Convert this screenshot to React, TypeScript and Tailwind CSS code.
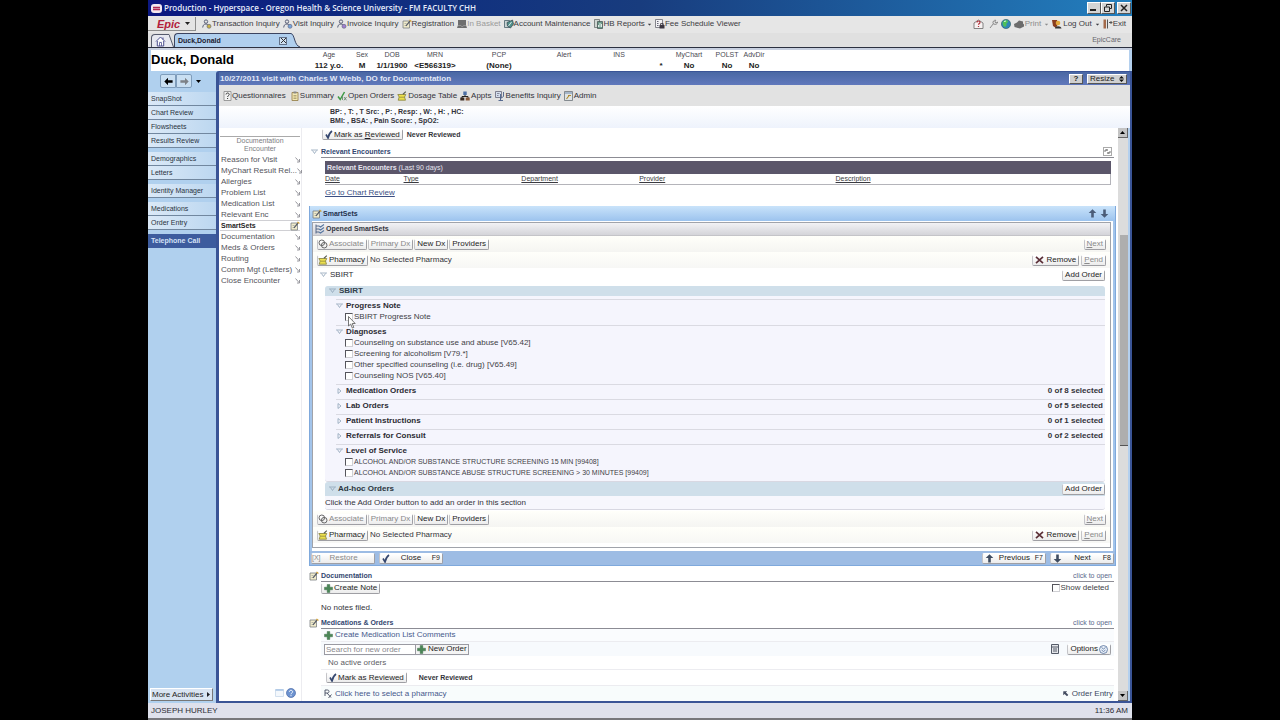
import { useState } from "react"
import type { ReactNode } from "react"
import clsx from "clsx"

interface IconProps {
  className?: string
}

interface SmartSection {
  name: string
  items: string[]
  total?: number
  small?: boolean
}

const menuItems = [
  { label: "Transaction Inquiry", icon: "person", tint: "#c8b24a" },
  { label: "Visit Inquiry", icon: "person", tint: "#7aa6dc" },
  { label: "Invoice Inquiry", icon: "person", tint: "#a07fd0" },
  { label: "Registration", icon: "note" },
  { label: "In Basket", icon: "basket", muted: true },
  { label: "Account Maintenance", icon: "chart", tint: "#4f8f8a" },
  { label: "HB Reports", icon: "report", tint: "#6b9a8a", menu: true },
  { label: "Fee Schedule Viewer", icon: "sheet" },
]

const patientFields = [
  { label: "Age", value: "112 y.o.", width: "w-12" },
  { label: "Sex", value: "M", width: "w-[18px]" },
  { label: "DOB", value: "1/1/1900", width: "w-[42px]" },
  { label: "MRN", value: "<E566319>", width: "w-11" },
  { label: "PCP", value: "(None)", width: "w-[84px]" },
  { label: "Alert", value: "", width: "w-[46px]" },
  { label: "INS", value: "", width: "w-16" },
  { label: "", value: "*", width: "w-5" },
  { label: "MyChart", value: "No", width: "w-9" },
  { label: "POLST", value: "No", width: "w-10" },
  { label: "AdvDir", value: "No", width: "w-[14px]" },
]

const activityGroups = [
  ["SnapShot", "Chart Review", "Flowsheets", "Results Review"],
  ["Demographics", "Letters"],
  ["Identity Manager"],
  ["Medications", "Order Entry"],
]

const navItems = [
  "Reason for Visit",
  "MyChart Result Rel...",
  "Allergies",
  "Problem List",
  "Medication List",
  "Relevant Enc",
  "SmartSets",
  "Documentation",
  "Meds & Orders",
  "Routing",
  "Comm Mgt (Letters)",
  "Close Encounter",
]

const encounterColumns = [
  { label: "Date", width: "w-[10%]" },
  { label: "Type", width: "w-[15%]" },
  { label: "Department", width: "w-[15%]" },
  { label: "Provider", width: "w-[25%]" },
  { label: "Description", width: "w-[35%]" },
]

const smartSections: SmartSection[] = [
  { name: "Progress Note", items: ["SBIRT Progress Note"] },
  {
    name: "Diagnoses",
    items: [
      "Counseling on substance use and abuse [V65.42]",
      "Screening for alcoholism [V79.*]",
      "Other specified counseling (i.e. drug) [V65.49]",
      "Counseling NOS [V65.40]",
    ],
  },
  { name: "Medication Orders", items: [], total: 8 },
  { name: "Lab Orders", items: [], total: 5 },
  { name: "Patient Instructions", items: [], total: 1 },
  { name: "Referrals for Consult", items: [], total: 2 },
  {
    name: "Level of Service",
    small: true,
    items: [
      "ALCOHOL AND/OR SUBSTANCE STRUCTURE SCREENING 15 MIN [99408]",
      "ALCOHOL AND/OR SUBSTANCE ABUSE STRUCTURE SCREENING > 30 MINUTES [99409]",
    ],
  },
]

/* ---------- icons ---------- */

function PersonIcon({ tint }: { tint?: string }) {
  return (
    <svg className="h-[10px] w-[10px] shrink-0" viewBox="0 0 10 10" fill="none">
      <circle cx="4" cy="2.6" r="1.7" stroke="#5a6078" />
      <path d="M.7 8.5C1 6 2 5 4 5c1 0 1.7.4 2.2 1" stroke="#5a6078" />
      <circle cx="7" cy="7.3" r="2" fill={tint} stroke="#5a6078" strokeWidth=".6" />
    </svg>
  )
}

function NoteIcon() {
  return (
    <svg className="h-[10px] w-[10px] shrink-0" viewBox="0 0 10 10" fill="none">
      <path d="M1 2h6.5v7H1z" fill="#f1ebca" stroke="#7a7f80" strokeWidth=".8" />
      <path d="M2.5 4.5h2M2.5 6.5h1.5" stroke="#9a9f9a" strokeWidth=".7" />
      <path d="M4 6.8 8 2" stroke="#565c66" strokeWidth="1.2" />
      <path d="M7.4 1 9.4 2.6" stroke="#d0a23a" strokeWidth="1.3" />
    </svg>
  )
}

function BasketIcon() {
  return (
    <svg className="h-[10px] w-[10px] shrink-0" viewBox="0 0 10 10">
      <path d="M1 1h8v5l1 3H0l1-3z" fill="#6e6e6e" />
      <path d="M1 6.5h3l.5 1H6l.5-1H9" stroke="#aaa" strokeWidth=".6" fill="none" />
    </svg>
  )
}

function ChartIcon({ tint }: { tint?: string }) {
  return (
    <svg className="h-[10px] w-[10px] shrink-0" viewBox="0 0 10 10">
      <path d="M.5 1.5h5v7h-5z" fill="#c9d4d4" stroke="#48606a" strokeWidth=".8" />
      <path d="M3 3.5 8.5 1l1 4-3 4-3-2z" fill={tint} stroke="#34444a" strokeWidth=".7" />
      <path d="m4.5 7 3-4" stroke="#fff" strokeWidth=".8" />
    </svg>
  )
}

function ReportIcon({ tint }: { tint?: string }) {
  return (
    <svg className="h-[10px] w-[10px] shrink-0" viewBox="0 0 10 10">
      <path d="M.5.5h5v8h-5z" fill="#cfd6d2" stroke="#59605e" strokeWidth=".7" />
      <path d="M3.5 2.5h5v7h-5z" fill={tint} stroke="#3f4a4a" strokeWidth=".7" />
      <path d="M4.5 8V6M6 8V4M7.5 8V5" stroke="#fff" strokeWidth=".8" />
    </svg>
  )
}

function SheetIcon() {
  return (
    <svg className="h-[10px] w-[10px] shrink-0" viewBox="0 0 10 10">
      <path d="M.5.5h7v8h-7z" fill="#f2f2f4" stroke="#6a6a72" strokeWidth=".8" />
      <path d="M2 2.5h1.5M2 4.5h1.5M2 6.5h1.5" stroke="#556" strokeWidth=".9" />
      <path d="M4.5 6h5v3.5h-5z" fill="#3a3540" />
      <path d="M5.6 6V4.6h2.6V6" fill="none" stroke="#3a3540" strokeWidth=".9" />
    </svg>
  )
}

function MenuIcon({ icon, tint }: { icon: string; tint?: string }) {
  if (icon === "person") return <PersonIcon tint={tint} />
  if (icon === "note") return <NoteIcon />
  if (icon === "basket") return <BasketIcon />
  if (icon === "chart") return <ChartIcon tint={tint} />
  if (icon === "report") return <ReportIcon tint={tint} />
  return <SheetIcon />
}

function HomeIcon() {
  return (
    <svg className="h-[11px] w-[11px]" viewBox="0 0 11 11" fill="none">
      <path d="M1 5.5 5.5 1 10 5.5M2.3 5v5h6.4V5" stroke="#4c4f8e" fill="#fff" />
      <path d="M4.5 10V6.5h2V10" stroke="#4c4f8e" strokeWidth=".8" />
      <path d="M8 1.5v2" stroke="#4c4f8e" />
    </svg>
  )
}

function QuestionIcon() {
  return (
    <svg className="h-[10px] w-[9px] shrink-0" viewBox="0 0 9 10" fill="none">
      <path d="M1 .5h7v9H1z" fill="#f4f4f4" stroke="#888" strokeWidth=".8" />
      <path d="M3 3.5c0-2 3.2-2 3.2 0 0 1.200-1.600 1.200-1.600 2.500M4.600 7v1" stroke="#333" />
    </svg>
  )
}

function SummaryIcon() {
  return (
    <svg className="h-[10px] w-[8px] shrink-0" viewBox="0 0 8 10">
      <path d="M1 1.5h6v8H1z" fill="#f3e8b4" stroke="#9a8450" strokeWidth=".9" />
      <path d="M2.5.5h3v2h-3z" fill="#888" />
      <path d="M2.5 4.5h3M2.5 6h3M2.5 7.5h3" stroke="#8a7a4c" strokeWidth=".6" />
    </svg>
  )
}

function OpenOrdersIcon() {
  return (
    <svg className="h-[10px] w-[10px] shrink-0" viewBox="0 0 10 10" fill="none">
      <path d="m1 5.500 2.200 3L7.500 1" stroke="#3d9a44" strokeWidth="1.5" />
      <path d="M5.5 9V5.5M7 9.300 9.500 6M7 6l2.500 3.300" stroke="#5b7f62" strokeWidth=".8" />
    </svg>
  )
}

function PharmacyIcon() {
  return (
    <svg className="h-[10px] w-[10px] shrink-0" viewBox="0 0 10 10">
      <path d="M.8 3.500h8L7.500 6l1 3.200H1.200l1-3.200z" fill="#ece04e" stroke="#85803a" strokeWidth=".8" />
      <path d="M6 3.300 8.800.6" stroke="#5c5f50" strokeWidth="1.2" />
      <path d="M2.5 6.200h5" stroke="#85803a" strokeWidth=".7" />
    </svg>
  )
}

function ApptsIcon() {
  return (
    <svg className="h-[10px] w-[10px] shrink-0" viewBox="0 0 10 10">
      <path d="M3.300.5h3.400v3.500H3.300z" fill="#4d6fa5" />
      <path d="M5 4v2M2 7V5.500h6V7" stroke="#222" fill="none" />
      <path d="M.3 6.500h4v3h-4z" fill="#3a2a22" />
      <path d="M5.700 6.500h4v3h-4z" fill="#8a5a3a" />
    </svg>
  )
}

function BenefitsIcon() {
  return (
    <svg className="h-[10px] w-[10px] shrink-0" viewBox="0 0 10 10" fill="none">
      <path d="M.5.5h6v6h-6z" fill="#d4deee" stroke="#667" strokeWidth=".8" />
      <path d="M2 2.5h2.500M2 4.500h1.500" stroke="#667" strokeWidth=".7" />
      <path d="M5.5 3v6.500M3.500 9.500h4.500M8.500 1v4.500l-3 2" stroke="#4a5f88" strokeWidth=".9" />
    </svg>
  )
}

function AdminIcon() {
  return (
    <svg className="h-[10px] w-[9px] shrink-0" viewBox="0 0 9 10" fill="none">
      <path d="M.5.5h8v9h-8z" fill="#dfe4e6" stroke="#6d757a" strokeWidth=".8" />
      <path d="M1 2h7" stroke="#7f98b8" strokeWidth="1.2" />
      <path d="m2.500 8 3-4M4 4.500h3" stroke="#b08a2a" strokeWidth="1.1" />
    </svg>
  )
}

function ArrowIcon({ className }: IconProps) {
  return (
    <svg className={clsx("h-[9px] w-[9px] shrink-0", className)} viewBox="0 0 9 9">
      <path d="M4.500.3 8.300 4H5.800v4.600H3.200V4H.7z" fill="currentColor" />
    </svg>
  )
}

function CaretIcon({ className }: IconProps) {
  return (
    <svg className={clsx("h-[3px] w-[5px] shrink-0", className)} viewBox="0 0 5 3">
      <path d="M0 0h5L2.500 3z" fill="currentColor" />
    </svg>
  )
}

function CheckIcon() {
  return (
    <svg className="h-[9px] w-[8px] shrink-0" viewBox="0 0 8 9" fill="none">
      <path d="M1 4.500 3 8C3.500 5 5 2.500 7 1" stroke="#35476f" strokeWidth="1.6" />
    </svg>
  )
}

function PlusIcon() {
  return (
    <svg className="h-[9px] w-[9px] shrink-0" viewBox="0 0 9 9">
      <path d="M3.200.5h2.600v2.700h2.700v2.600H5.800v2.700H3.200V5.800H.5V3.200h2.700z" fill="#4a8656" stroke="#2f5f3c" strokeWidth=".4" />
    </svg>
  )
}

function AssociateIcon() {
  return (
    <svg className="h-[10px] w-[10px] shrink-0" viewBox="0 0 10 10" fill="none">
      <circle cx="3.8" cy="3.8" r="2.8" stroke="#666" />
      <circle cx="6.2" cy="6.2" r="2.8" stroke="#666" />
    </svg>
  )
}

function RemoveIcon() {
  return (
    <svg className="h-[8px] w-[9px] shrink-0" viewBox="0 0 9 8">
      <path d="m1 .8 7 6.400M8 .8 1 7.200" stroke="#5c3038" strokeWidth="1.7" />
    </svg>
  )
}

function JumpIcon() {
  return (
    <svg className="h-[6px] w-[5px] shrink-0" viewBox="0 0 5 6" fill="none">
      <path d="m.5.5 3.500 4M4.500 2v3H2" stroke="#8d8d94" strokeWidth=".9" />
    </svg>
  )
}

function DisclosureIcon({ open }: { open: boolean }) {
  return (
    <svg className="h-[6px] w-[7px] shrink-0" viewBox="0 0 7 6" fill="none">
      <path d={open ? "M0 1h7M1.500 1.500 3.500 4.500 5.500 1.500" : "m2 .5 3 2.500-3 2.500z"} stroke="#8fa3b8" strokeWidth=".8" />
    </svg>
  )
}

function OpenedIcon() {
  return (
    <svg className="h-[10px] w-[10px] shrink-0" viewBox="0 0 10 10" fill="none">
      <path d="M1 .5v9M1 2h3M1 5h3M1 8h3" stroke="#4a5f80" strokeWidth=".9" />
      <path d="m4 2 1.500 1L9 .5M4 5l1.500 1L9 3.500M4 8l1.500 1L9 6.500" stroke="#5877a0" strokeWidth="1.1" />
    </svg>
  )
}

function PointerIcon({ className }: IconProps) {
  return (
    <svg className={clsx("h-[13px] w-2", className)} viewBox="0 0 8 13">
      <path d="M.5.5v9.500l2.200-2 1.600 4 1.500-.6-1.600-3.900h3z" fill="#fff" stroke="#555" strokeWidth=".8" />
    </svg>
  )
}

/* ---------- small controls ---------- */

interface ToolButtonProps {
  children: ReactNode
  disabled?: boolean
  className?: string
}

function ToolButton({ children, disabled, className }: ToolButtonProps) {
  return (
    <button
      type="button"
      disabled={disabled}
      className={clsx(
        "flex h-[11px] items-center gap-[1px] rounded-[2px] border border-t-white border-r-[#9f9fa4] border-b-[#9f9fa4] border-l-[#c4c4c8] bg-linear-to-b from-white to-[#ececec] px-[2px]",
        disabled ? "text-[#8a8a8a]" : "text-[#1e1e24]",
        className
      )}
    >
      {children}
    </button>
  )
}

function CheckBox({ label, small }: { label: string; small?: boolean }) {
  return (
    <label className={clsx("flex h-[11px] w-fit items-center gap-[1px] text-[#3f3f46]", small && "text-[7px]")}>
      <input
        type="checkbox"
        className="h-2 w-2 appearance-none border border-t-[#55555c] border-r-[#d0d0d4] border-b-[#d0d0d4] border-l-[#55555c] bg-white checked:bg-[#55555c]"
      />
      {label}
    </label>
  )
}

function SectionTitle({ children, icon, aside }: { children: string; icon: ReactNode; aside: ReactNode }) {
  return (
    <div className="flex h-3">
      <span className="flex w-3 items-center">{icon}</span>
      <div className="flex flex-1 items-center border-b border-[#8c8c94]">
        <h2 className="text-[7px] font-bold text-[#32466f]">{children}</h2>
        <span className="ml-auto pr-[2px]">{aside}</span>
      </div>
    </div>
  )
}

function SmartSetActions() {
  return (
    <>
      <div className="flex h-4 items-center gap-[1px] bg-linear-to-b from-[#fffffa] to-[#f5f5f2] pr-1 pl-1">
        <ToolButton disabled className="pl-0">
          <AssociateIcon />
          Associate
        </ToolButton>
        <ToolButton disabled>Primary Dx</ToolButton>
        <ToolButton>New Dx</ToolButton>
        <ToolButton>Providers</ToolButton>
        <ToolButton disabled className="ml-auto">
          <span>
            <u>N</u>ext
          </span>
        </ToolButton>
      </div>
      <div className="flex h-4 items-center gap-[2px] bg-linear-to-b from-[#fffffa] to-[#f7f7f5] pr-1 pl-1">
        <ToolButton className="pl-0">
          <PharmacyIcon />
          Pharmacy
        </ToolButton>
        <span>No Selected Pharmacy</span>
        <ToolButton className="ml-auto">
          <RemoveIcon />
          <span className="ml-[2px]">Remove</span>
        </ToolButton>
        <ToolButton disabled>
          <span>
            <u>P</u>end
          </span>
        </ToolButton>
      </div>
    </>
  )
}

function SmartSetSection({ name, items, total, small }: SmartSection) {
  const [open, setOpen] = useState(!!items.length)

  return (
    <section className="ml-[11px] border-t border-[#dadae2] pb-[3px]">
      <div className="flex h-[11px] items-center">
        <button
          type="button"
          className="flex items-center gap-[3px] font-bold text-[#2b2b33]"
          onClick={() => setOpen(!open)}
        >
          <DisclosureIcon open={open} />
          {name}
        </button>
        {total && <span className="ml-auto pr-[2px] font-bold">0 of {total} selected</span>}
      </div>
      {open && (
        <div className="pl-[9px]">
          {items.map((item) => (
            <CheckBox key={item} label={item} small={small} />
          ))}
        </div>
      )}
    </section>
  )
}

/* ---------- page parts ---------- */

function TitleBar() {
  return (
    <header className="flex h-4 items-center bg-linear-to-r from-[#0c1880] via-[#183c7e] to-[#237fbe] pr-[1px] pl-[3px]">
      <svg className="h-[9px] w-[11px]" viewBox="0 0 11 9">
        <rect width="11" height="9" rx="3" fill="#f3e9f0" />
        <path d="M2 3.500h7M2 5.500h7" stroke="#b02a52" strokeWidth="1.3" />
      </svg>
      <h1 className="ml-[2px] font-['Open_Sans',sans-serif] text-[8px] font-semibold text-[#e6ecfa]">
        Production - Hyperspace - Oregon Health &amp; Science University - FM FACULTY CHH
      </h1>
      <div className="ml-auto flex text-[#222]">
        <button type="button" aria-label="Minimize" className="flex h-3 w-[14px] items-end border border-t-white border-l-white border-r-[#555] border-b-[#555] bg-[#d4d4d4] p-[2px]">
          <span className="h-[2px] w-[6px] bg-[#222]" />
        </button>
        <button type="button" aria-label="Restore window" className="flex h-3 w-[14px] items-center justify-center border border-t-white border-l-white border-r-[#555] border-b-[#555] bg-[#d4d4d4]">
          <svg className="h-2 w-2" viewBox="0 0 8 8" fill="none" stroke="#222">
            <path d="M2.500 2.500v-2h5v4h-2M.5 3h5v4.500h-5z" />
          </svg>
        </button>
        <button type="button" aria-label="Close window" className="ml-[2px] flex h-3 w-[14px] items-center justify-center border border-t-white border-l-white border-r-[#555] border-b-[#555] bg-[#d4d4d4]">
          <svg className="h-2 w-2" viewBox="0 0 8 8" fill="none" stroke="#222" strokeWidth="1.5">
            <path d="m1 1 6 6M7 1 1 7" />
          </svg>
        </button>
      </div>
    </header>
  )
}

function MenuBar() {
  return (
    <nav className="flex h-[17px] items-center bg-[#e6e6e6] pb-[1px] text-[#3c3c42]">
      <button
        type="button"
        className="mr-[6px] flex h-[14px] w-12 items-center justify-between border-r border-b border-[#8c8c8c] bg-[#e4e4e4] pr-[5px] pl-[9px] text-[11px] font-black text-[#b3203c] italic"
      >
        Epic
        <CaretIcon className="text-[#222]" />
      </button>
      <div className="flex items-center gap-[3px]">
        {menuItems.map(({ label, icon, tint, muted, menu }) => (
          <button
            key={label}
            type="button"
            className={clsx("flex items-center", muted && "text-[#9a9a9a]")}
          >
            <MenuIcon icon={icon} tint={tint} />
            {label}
            {menu && <CaretIcon className="ml-[2px] scale-75" />}
          </button>
        ))}
      </div>
      <div className="ml-auto flex items-center gap-[3px] pr-[6px]">
        <svg className="mr-[2px] h-[10px] w-[11px]" viewBox="0 0 11 10" fill="none">
          <path d="M1 4 5.500 1 10 4v5.500H1z" fill="#f7f2f2" stroke="#777" strokeWidth=".9" />
          <path d="M4 3.500c0-2 3-2 3 0 0 1-1.500 1-1.500 2.200M5.500 7v1" stroke="#b0303a" strokeWidth="1.2" />
        </svg>
        <svg className="h-[10px] w-[9px]" viewBox="0 0 9 10" fill="none">
          <path d="m1 9 3.500-4.500M4 4.500C3.500 2.500 5 1 6.800 1.200L5.800 3l1.200 1 1.600-1C8.500 5 6.500 6 4.800 5z" stroke="#8a8a8a" />
        </svg>
        <svg className="h-[10px] w-[10px]" viewBox="0 0 10 10">
          <circle cx="5" cy="5" r="4.6" fill="#2f86b8" stroke="#2d5a60" strokeWidth=".6" />
          <path d="M2 2.500C4 .5 7 1 7 2.500S5 4 5.500 5.500 4 8.500 3 7.500 1 4 2 2.500z" fill="#4fc05a" />
          <path d="M3 2.500 5 2" stroke="#d8fbe0" />
        </svg>
        <button type="button" disabled className="flex items-center gap-[1px] text-[#8c8c8c]">
          <svg className="h-[9px] w-[10px]" viewBox="0 0 10 9">
            <path d="M0 4 3 2.500 5 .5l4 1v2l1 1v2L6 8.500.5 7z" fill="#6c6c6c" />
          </svg>
          Print
          <CaretIcon className="ml-[2px] scale-75" />
        </button>
        <button type="button" className="flex items-center gap-[1px]">
          <svg className="h-[10px] w-[10px]" viewBox="0 0 10 10">
            <path d="M0 1h5l1 4-2 4-3-2z" fill="#8a3d1e" />
            <circle cx="6" cy="4" r="2.3" fill="#e3a93c" />
            <path d="M3 9.500c0-3 6-3 6.500 0z" fill="#333" />
          </svg>
          Log Out
          <CaretIcon className="ml-[2px] scale-75" />
        </button>
        <button type="button" className="flex items-center">
          <svg className="h-[10px] w-[10px]" viewBox="0 0 10 10" fill="none">
            <path d="M.5.5h2.500v9H.5z" fill="#a46a4a" />
            <path d="M4.500.5v9" stroke="#555" />
            <path d="M6 3.500h3M7.500 2 9 3.500 7.500 5" stroke="#555" />
          </svg>
          Exit
        </button>
      </div>
    </nav>
  )
}

function TabStrip() {
  return (
    <div className="flex h-[15px] items-end border-b border-[#2c3040] bg-[#e0e0e0] pl-[3px]">
      <button type="button" aria-label="Home" className="flex h-[13px] w-[18px] items-center justify-center rounded-tl-[4px] border-t border-l border-[#555a6c] bg-[#e6e8f0]">
        <HomeIcon />
      </button>
      <svg className="h-[13px] w-[5px]" viewBox="0 0 5 13">
        <path d="M0 0 4.500 13H0z" fill="#e6e8f0" />
        <path d="M0 .5 4.500 13" stroke="#555a6c" fill="none" />
      </svg>
      <div className="flex h-[14px] w-[115px] items-center justify-between rounded-tl-[4px] border-t border-l border-[#3c4460] bg-[#b0cfee] pr-[2px] pl-[3px]">
        <span className="text-[7px] font-bold text-[#1c2030]">Duck,Donald</span>
        <button type="button" aria-label="Close tab" className="flex h-2 w-2 items-center justify-center border border-[#62718a] bg-[#cfe0f2]">
          <svg className="h-[5px] w-[5px]" viewBox="0 0 5 5" stroke="#333">
            <path d="m0 0 5 5M5 0 0 5" />
          </svg>
        </button>
      </div>
      <svg className="h-[14px] w-3" viewBox="0 0 12 14">
        <path d="M0 0h2c4 1 3 12 9 14H0z" fill="#b0cfee" />
        <path d="M0 .5h2c4 1 3 12 9 13.500" stroke="#3c4460" fill="none" />
      </svg>
      <span className="ml-auto self-center pr-[11px] text-[7px] text-[#66666c]">EpicCare</span>
    </div>
  )
}

function PatientHeader() {
  return (
    <div className="border-t-2 border-[#c8d0e0] bg-[#b4d0ee] px-[3px]">
      <div className="flex h-[21px] bg-white whitespace-nowrap">
        <h2 className="w-[154px] text-[13px] leading-[20px] font-bold text-black">Duck, Donald</h2>
        <dl className="flex">
          {patientFields.map(({ label, value, width }, index) => (
            <div key={index} className={clsx("flex flex-col items-center", width)}>
              <dt className="h-[10px] text-[7px] leading-[9px] text-[#4a4a52]">{label}</dt>
              <dd className="leading-[11px] font-bold text-[#222]">{value}</dd>
            </div>
          ))}
        </dl>
      </div>
    </div>
  )
}

function ActivityBar() {
  return (
    <aside className="flex w-[68px] shrink-0 flex-col bg-[#b0d0ee]">
      <div className="flex h-[21px] items-start pt-[3px] pl-3">
        <button type="button" aria-label="Back" className="flex h-[14px] w-4 items-center justify-center rounded-l-[2px] border border-[#7f9dbb] bg-[#c9dff2]">
          <ArrowIcon className="-rotate-90 text-black" />
        </button>
        <button type="button" aria-label="Forward" className="flex h-[14px] w-4 items-center justify-center rounded-r-[2px] border border-[#7f9dbb] bg-[#c9dff2]">
          <ArrowIcon className="rotate-90 text-[#7d8288]" />
        </button>
        <CaretIcon className="mt-[6px] ml-1 text-black" />
      </div>
      <ul className="flex flex-col gap-1">
        {activityGroups.map((group) => (
          <li key={group[0]}>
            {group.map((name) => (
              <button
                key={name}
                type="button"
                className="flex h-[14px] w-full items-center border-b border-[#71879f] bg-linear-to-r from-[#dbe9f7] to-[#bcd7f0] pl-[3px] text-[7px] text-[#2a3340]"
              >
                {name}
              </button>
            ))}
          </li>
        ))}
        <li>
          <button type="button" className="flex h-[14px] w-full items-center bg-[#3d5c9e] pl-[3px] text-[7px] font-bold text-[#d5e2f6]">
            Telephone Call
          </button>
        </li>
      </ul>
      <button
        type="button"
        className="mt-auto mb-[2px] ml-[2px] flex h-[13px] w-[63px] items-center justify-between border border-t-white border-l-white border-r-[#777] border-b-[#777] bg-[#d9e4f2] px-[1px] text-[#1e1e24]"
      >
        More Activities
        <CaretIcon className="-rotate-90" />
      </button>
    </aside>
  )
}

function VisitToolbar() {
  return (
    <div className="flex h-[21px] items-center gap-[3px] bg-[#e2e2e2] pl-1 text-[#33333a]">
      <button type="button" className="flex items-center">
        <QuestionIcon />
        Questionnaires
      </button>
      <button type="button" className="ml-[2px] flex items-center gap-[1px]">
        <SummaryIcon />
        Summary
      </button>
      <button type="button" className="flex items-center gap-[1px]">
        <OpenOrdersIcon />
        Open Orders
      </button>
      <button type="button" className="flex items-center gap-[1px]">
        <PharmacyIcon />
        Dosage Table
      </button>
      <button type="button" className="flex items-center gap-[1px]">
        <ApptsIcon />
        Appts
      </button>
      <button type="button" className="flex items-center gap-[1px]">
        <BenefitsIcon />
        Benefits Inquiry
      </button>
      <button type="button" className="flex items-center gap-[1px]">
        <AdminIcon />
        Admin
      </button>
    </div>
  )
}

function NavColumn() {
  return (
    <nav className="flex w-[83px] shrink-0 flex-col border-r border-[#ececf0] pt-2 pr-[1px] pl-[1px] text-[#55555c]">
      <div className="h-[18px] border-t border-[#aaa] text-center text-[7px] leading-[8px] text-[#7c7c82]">
        Documentation
        <br />
        Encounter
      </div>
      <ul>
        {navItems.map((item) => {
          const active = item === "SmartSets"
          return (
            <li
              key={item}
              className={clsx(
                "flex h-[11px] items-center justify-between pl-[1px] whitespace-nowrap",
                active && "border-y border-[#d0d0d4] font-bold text-[#1e1e24]"
              )}
            >
              <a href="#" className={clsx(active && "text-[7px]")}>{item}</a>
              {active ? <NoteIcon /> : <JumpIcon />}
            </li>
          )
        })}
      </ul>
      <div className="mt-auto flex justify-end gap-[2px] pr-1 pb-[3px]">
        <svg className="h-[10px] w-[9px]" viewBox="0 0 9 10">
          <path d="M.5 1.500h8v7h-8z" fill="#f4f8fc" stroke="#d3e0ee" />
          <path d="M.5 2h8" stroke="#a8c4e4" strokeWidth="1.5" />
        </svg>
        <svg className="h-[10px] w-[10px]" viewBox="0 0 10 10" fill="none">
          <circle cx="5" cy="5" r="4.5" fill="#6d93d0" stroke="#4a6aa8" strokeWidth=".7" />
          <path d="M3.400 3.800c0-2 3.200-2 3.200 0C6.600 5 5 5 5 6.300M5 7.200v1" stroke="#fff" />
        </svg>
      </div>
    </nav>
  )
}

function RelevantEncounters() {
  return (
    <>
      <div className="mt-[5px]">
        <SectionTitle
          icon={<span className="ml-[2px]"><DisclosureIcon open /></span>}
          aside={
            <button type="button" aria-label="Refresh" className="block h-[9px] w-[9px] border border-[#aaa] bg-white">
              <svg className="h-[7px] w-[7px]" viewBox="0 0 7 7" fill="none" stroke="#555">
                <path d="M1 4V2h2.500M6 3v2H3.500M2.500 1 3.500 2l-1 1M4.500 4l-1 1 1 1" strokeWidth=".8" />
              </svg>
            </button>
          }
        >
          Relevant Encounters
        </SectionTitle>
      </div>
      <div className="mt-[3px] mr-[3px] ml-4">
        <h3 className="flex h-[13px] items-center bg-[#5b566a] pl-[2px] text-[7px] font-bold text-[#e6e4ee]">
          <span>
            Relevant Encounters <span className="font-normal">(Last 90 days)</span>
          </span>
        </h3>
        <table className="w-full table-fixed border-r border-b border-[#b4b4ba] text-[7px] leading-[10px]">
          <thead>
            <tr>
              {encounterColumns.map(({ label, width }) => (
                <th key={label} className={clsx("p-0 text-left font-normal text-[#3a3a40] underline", width)}>
                  {label}
                </th>
              ))}
            </tr>
          </thead>
        </table>
        <a href="#" className="mt-[3px] flex h-[10px] w-fit items-center text-[#3b4f84] underline">
          Go to Chart Review
        </a>
      </div>
    </>
  )
}

function SmartSets() {
  return (
    <section className="mt-2 mr-[-2px] border-x border-b border-[#7fa9dc] bg-[#a3c4ea]">
      <div className="flex h-[15px] items-center gap-[1px] bg-linear-to-b from-[#c9e3fa] to-[#9cc3ee] px-[2px]">
        <NoteIcon />
        <h2 className="text-[7px] font-bold text-[#22304c]">SmartSets</h2>
        <ArrowIcon className="ml-auto text-[#4b5c78]" />
        <ArrowIcon className="mr-1 ml-[2px] rotate-180 text-[#4b5c78]" />
      </div>
      <div className="mx-[2px] bg-white pt-[1px] pr-[2px] pb-[3px]">
        <div className="border border-[#a0a3aa] pb-1">
          <div className="flex h-[13px] items-center gap-[1px] border-b border-[#c4c4c8] bg-linear-to-b from-[#f2f2f5] to-[#d4d4d9] pl-[2px]">
            <OpenedIcon />
            <h3 className="text-[7px] font-bold text-[#33363f]">Opened SmartSets</h3>
          </div>
          <SmartSetActions />
          <div className="flex h-[14px] items-center pr-[5px] pl-[7px]">
            <DisclosureIcon open />
            <span className="ml-[3px] text-[#2b2b33]">SBIRT</span>
            <ToolButton className="ml-auto">Add Order</ToolButton>
          </div>
          <div className="relative mt-1 mr-[5px] ml-3 rounded-[3px] border-b border-[#d8d8e2] bg-[#f5f5fd]">
            <div className="mb-[3px] flex h-[10px] items-center gap-[3px] rounded-t-[3px] bg-[#cfdfea] pl-1 font-bold text-[#33414c]">
              <DisclosureIcon open />
              <h4>SBIRT</h4>
            </div>
            {smartSections.map((section) => (
              <SmartSetSection key={section.name} {...section} />
            ))}
            <PointerIcon className="pointer-events-none absolute top-[30px] left-[23px]" />
          </div>
          <div className="mr-[5px] mb-[1px] ml-3 rounded-[3px] border-b border-[#d8d8e2] bg-[#f7f7fd]">
            <div className="flex h-[14px] items-center rounded-t-[3px] bg-[#cfdfea] pl-1 text-[#2b3640]">
              <DisclosureIcon open />
              <h4 className="ml-[2px] font-bold">Ad-hoc Orders</h4>
              <ToolButton className="ml-auto">Add Order</ToolButton>
            </div>
            <p className="flex h-[13px] items-center">
              Click the Add Order button to add an order in this section
            </p>
          </div>
          <SmartSetActions />
        </div>
      </div>
      <div className="flex h-[14px] items-center gap-1 bg-[#9dbce4] px-[1px]">
        <ToolButton disabled className="w-16 gap-[9px] pl-0">
          <span className="text-[7px]">[X]</span>
          Restore
        </ToolButton>
        <ToolButton className="w-16 justify-between">
          <CheckIcon />
          Close
          <span className="text-[7px]">F9</span>
        </ToolButton>
        <ToolButton className="ml-auto w-16 justify-between">
          <ArrowIcon className="text-[#3f4c60]" />
          Previous
          <span className="text-[7px]">F7</span>
        </ToolButton>
        <ToolButton className="w-16 justify-between">
          <ArrowIcon className="rotate-180 text-[#3f4c60]" />
          Next
          <span className="text-[7px]">F8</span>
        </ToolButton>
      </div>
    </section>
  )
}

function ClickToOpen() {
  return (
    <a href="#" className="text-[7px] text-[#5a688c]">
      click to open
    </a>
  )
}

function DocumentationSection() {
  return (
    <section className="mt-1">
      <SectionTitle icon={<NoteIcon />} aside={<ClickToOpen />}>
        Documentation
      </SectionTitle>
      <div className="flex h-3 items-center justify-between pr-[5px] pl-3">
        <ToolButton>
          <PlusIcon />
          Create Note
        </ToolButton>
        <CheckBox label="Show deleted" />
      </div>
      <p className="mt-2 flex h-3 items-center pl-3">No notes filed.</p>
    </section>
  )
}

function MedicationsSection() {
  const [search, setSearch] = useState("")

  return (
    <section className="mt-[3px]">
      <SectionTitle icon={<NoteIcon />} aside={<ClickToOpen />}>
        {"Medications & Orders"}
      </SectionTitle>
      <div className="ml-3">
        <div className="flex h-[13px] items-center gap-[2px] border-b border-[#ececf0] bg-[#fafcfe] pl-[3px]">
          <PlusIcon />
          <a href="#" className="text-[#465a8c]">Create Medication List Comments</a>
        </div>
        <div className="flex h-[14px] items-center bg-[#f7fafd] pr-[3px] pl-[3px]">
          <input
            aria-label="Search for new order"
            placeholder="Search for new order"
            value={search}
            onChange={(e) => setSearch(e.target.value)}
            className="h-[11px] w-[92px] border border-[#9a9aa2] bg-white px-[1px] placeholder:text-[#8a8a90]"
          />
          <button type="button" className="flex h-[11px] items-center gap-[2px] border border-l-0 border-[#9a9aa2] bg-[#f4f4f4] px-[1px] text-[#1e1e24]">
            <PlusIcon />
            New Order
          </button>
          <svg className="mr-2 ml-auto h-[10px] w-2" viewBox="0 0 8 10" fill="none">
            <path d="M.5.5h7v9h-7z" fill="#e4e6ea" stroke="#555b68" />
            <path d="M1 3h6M2 5h4M2 7h4" stroke="#555b68" />
          </svg>
          <ToolButton>
            Options
            <svg className="h-[9px] w-[9px]" viewBox="0 0 9 9" fill="none" stroke="#54709a" strokeWidth=".8">
              <circle cx="4.5" cy="4.5" r="4" fill="#e8eff8" />
              <path d="m2.500 2.500 2 1.500 2-1.500M2.500 5l2 1.500 2-1.500" />
            </svg>
          </ToolButton>
        </div>
        <p className="flex h-[14px] items-center border-b border-[#ececf0] pl-[7px] text-[#5c5c64]">No active orders</p>
        <div className="flex h-4 items-center gap-3 border-b border-[#ececf0] pl-[5px]">
          <ToolButton>
            <CheckIcon />
            Mark as Reviewed
          </ToolButton>
          <span className="text-[7px] font-bold">Never Reviewed</span>
        </div>
        <div className="flex h-[15px] items-center gap-[2px] bg-[#f8fcfc] pr-[1px] pl-[3px]">
          <svg className="h-[9px] w-[9px]" viewBox="0 0 9 9" fill="none" stroke="#444c60">
            <path d="M1 7V1h2.500c2 0 2 3 0 3H1M3 4l4 4.500M7.500 5.500 4.500 9" strokeWidth=".9" />
          </svg>
          <a href="#" className="text-[#465a8c]">Click here to select a pharmacy</a>
          <ArrowIcon className="ml-auto scale-75 -rotate-45 text-[#444c60]" />
          <a href="#" className="text-[#3c4860]">Order Entry</a>
        </div>
      </div>
    </section>
  )
}

function ScrollBar() {
  return (
    <div className="flex w-[10px] shrink-0 flex-col bg-[#dcdcdc]">
      <div className="flex h-[10px] items-center justify-center border-r border-b border-[#666] bg-[#c4c4c4]">
        <CaretIcon className="rotate-180 text-black" />
      </div>
      <div className="mt-[97px] ml-[2px] h-[211px] border-b border-[#555] bg-[#aeaeae]" />
      <div className="mt-auto flex h-[10px] items-center justify-center border-r border-b border-[#666] bg-[#c4c4c4]">
        <CaretIcon className="text-black" />
      </div>
    </div>
  )
}

function Workspace() {
  return (
    <main className="flex flex-1 flex-col rounded-tl-[3px] border-t border-r-2 border-b-2 border-l-[3px] border-[#3a5496] bg-white">
      <div className="flex h-[13px] items-center gap-1 bg-linear-to-b from-[#4a68a4] to-[#6078bc] pr-[3px] pl-[1px]">
        <h2 className="font-bold text-[#e2e9f8]">
          10/27/2011 visit with Charles W Webb, DO for Documentation
        </h2>
        <button type="button" className="ml-auto h-[10px] w-[14px] border border-t-white border-l-white border-r-[#555] border-b-[#555] bg-[#d0d0d0] leading-[8px] font-bold text-[#222]">
          ?
        </button>
        <button type="button" className="flex h-[10px] w-10 items-center justify-between border border-t-white border-l-white border-r-[#555] border-b-[#555] bg-[#d0d0d0] px-[2px] text-[#222]">
          Resize
          <svg className="h-[6px] w-[5px]" viewBox="0 0 5 6">
            <path d="M0 2.500 2.500 0 5 2.500zM0 3.500 2.500 6 5 3.500z" fill="#111" />
          </svg>
        </button>
      </div>
      <VisitToolbar />
      <div className="flex h-[22px] flex-col justify-center bg-linear-to-b from-white to-[#eef3fc] pb-[2px] pl-[111px] text-[7px] leading-[9px] font-bold text-[#33333a]">
        <p>BP: , T: , T Src: , P: , Resp: , W: , H: , HC:</p>
        <p>BMI: , BSA: , Pain Score: , SpO2:</p>
      </div>
      <div className="flex flex-1">
        <NavColumn />
        <div className="flex-1 pr-1 pl-[7px] text-[#33333a]">
          <div className="flex h-[13px] items-center gap-1 pl-[13px]">
            <ToolButton className="px-[1px]">
              <CheckIcon />
              <span>
                Mark as <u>R</u>eviewed
              </span>
            </ToolButton>
            <span className="text-[7px] font-bold">Never Reviewed</span>
          </div>
          <RelevantEncounters />
          <SmartSets />
          <DocumentationSection />
          <MedicationsSection />
        </div>
        <ScrollBar />
        <div className="w-[2px] bg-[#b4d0ee]" />
      </div>
    </main>
  )
}

export default function App() {
  return (
    <div className="flex min-h-screen bg-black px-[148px] font-['Liberation_Sans',Arial,sans-serif] text-[8px] leading-[10px]">
      <div className="flex flex-1 flex-col bg-[#b0d0ee]">
        <TitleBar />
        <MenuBar />
        <TabStrip />
        <PatientHeader />
        <div className="flex flex-1">
          <ActivityBar />
          <Workspace />
        </div>
        <footer className="flex h-[17px] items-center justify-between border-b-2 border-[#77777c] bg-[#dfe1ec] pr-1 pl-[3px] text-[#2c2c34]">
          <span>JOSEPH HURLEY</span>
          <span>11:36 AM</span>
        </footer>
      </div>
    </div>
  )
}
